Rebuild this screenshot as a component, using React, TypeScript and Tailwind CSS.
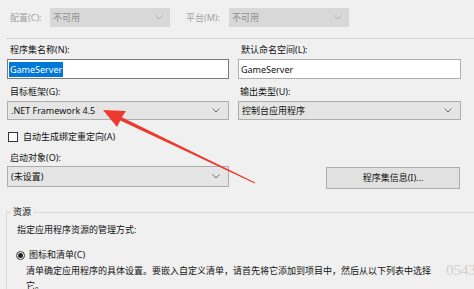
import React from "react";

function Chevron({ light }: { light?: boolean }) {
  return (
    <svg width="8" height="5" viewBox="0 0 8 5" className="shrink-0">
      <polyline
        points="0.5,0.5 4,4 7.5,0.5"
        fill="none"
        stroke={light ? "#b4b4b4" : "#6a6a6a"}
        strokeWidth="1"
      />
    </svg>
  );
}

function Dropdown({ text, h }: { text: string; h: string }) {
  return (
    <div
      className={`flex items-center justify-between ${h} border border-[#adadad] bg-[#e5e5e5] pl-[3px] pr-[8px] text-[#111]`}
    >
      <span className="leading-[14px]">{text}</span>
      <Chevron />
    </div>
  );
}

export default function App() {
  return (
    <div className="relative h-[289px] w-[474px] overflow-hidden bg-[#f0f0f0] font-['Noto_Sans','Noto_Sans_CJK_SC',sans-serif] text-[9px] text-[#111]">
      {/* top disabled row */}
      <div className="mt-[8px] flex h-[19px] items-center pl-[10px]">
        <span className="w-[40px] leading-[14px] text-[#a3a3a3]">配置(C):</span>
        <div className="flex h-[19px] w-[120px] items-center justify-between bg-[#d8d8d8] pl-[3px] pr-[7px]">
          <span className="leading-[14px] text-[#8e8e8e]">不可用</span>
          <Chevron light />
        </div>
        <span className="ml-[16px] w-[43px] leading-[14px] text-[#a3a3a3]">平台(M):</span>
        <div className="flex h-[19px] w-[120px] items-center justify-between bg-[#d8d8d8] pl-[3px] pr-[7px]">
          <span className="leading-[14px] text-[#8e8e8e]">不可用</span>
          <Chevron light />
        </div>
      </div>

      <div className="ml-[6px] mt-[11px] h-px bg-[#d3d3d3]" />

      {/* form grid */}
      <div className="grid grid-cols-[222px_223px] gap-x-[9px] px-[7px]">
        {/* row A */}
        <div className="mt-[4px] flex flex-col">
          <span className="h-[14px] pl-[3px] leading-[14px]">程序集名称(N):</span>
          <div className="mt-[2px] flex h-[20px] items-center border border-[#7a7a7a] bg-white pl-[1px]">
            <span className="bg-[#0078d7] px-[1px] leading-[15px] text-white">GameServer</span>
          </div>
        </div>
        <div className="mt-[4px] flex flex-col">
          <span className="h-[14px] pl-[3px] leading-[14px]">默认命名空间(L):</span>
          <div className="mt-[2px] flex h-[20px] items-center border border-[#adadad] bg-white pl-[2px]">
            <span className="leading-[15px]">GameServer</span>
          </div>
        </div>

        {/* row B */}
        <div className="mt-[6px] flex flex-col">
          <span className="h-[14px] pl-[3px] leading-[14px]">目标框架(G):</span>
          <div className="mt-[2px]">
            <Dropdown text=".NET Framework 4.5" h="h-[19px]" />
          </div>
        </div>
        <div className="mt-[6px] flex flex-col">
          <span className="h-[14px] pl-[2px] leading-[14px]">输出类型(U):</span>
          <div className="mt-[2px]">
            <Dropdown text="控制台应用程序" h="h-[19px]" />
          </div>
        </div>

        {/* checkbox row */}
        <div className="col-span-2 mt-[10px] flex h-[14px] items-center">
          <div className="ml-[1px] h-[10px] w-[10px] border border-[#333] bg-white" />
          <span className="ml-[5px] leading-[14px]">自动生成绑定重定向(A)</span>
        </div>

        {/* row D */}
        <div className="mt-[7px] flex flex-col">
          <span className="h-[14px] pl-[3px] leading-[14px]">启动对象(O):</span>
          <div className="mt-[1px]">
            <Dropdown text="(未设置)" h="h-[21px]" />
          </div>
        </div>
        <div className="mt-[7px] flex justify-end pt-[16px] pr-[1px]">
          <div className="flex h-[22px] w-[134px] items-center justify-center border border-[#adadad] bg-[#e1e1e1]">
            <span className="leading-[14px]">程序集信息(I)...</span>
          </div>
        </div>
      </div>

      {/* resources group */}
      <div className="relative ml-[6px] mt-[23px] border-l border-t border-[#d9d9d9] pl-[10px] pt-[10px]">
        <span className="absolute left-[4px] top-[-8px] bg-[#f0f0f0] px-[2px] leading-[14px]">资源</span>
        <div className="leading-[14px]">指定应用程序资源的管理方式:</div>
        <div className="mt-[11px] flex h-[14px] items-center">
          <div className="ml-[-1px] flex h-[9px] w-[9px] items-center justify-center rounded-full border border-[#333] bg-white">
            <div className="h-[5px] w-[5px] rounded-full bg-[#222]" />
          </div>
          <span className="ml-[4px] leading-[14px]">图标和清单(C)</span>
        </div>
        <div className="ml-[9px] mt-[1px] leading-[15px]">
          清单确定应用程序的具体设置。要嵌入自定义清单，请首先将它添加到项目中，然后从以下列表中选择
          <br />
          它。
        </div>
      </div>

      {/* watermark */}
      <span className="pointer-events-none absolute left-[446px] top-[262px] font-['Liberation_Serif',serif] text-[15px] leading-[16px] text-[#cfcfcf]">
        0543
      </span>

      {/* red arrow annotation */}
      <svg className="pointer-events-none absolute left-0 top-0" width="474" height="289" viewBox="0 0 474 289">
        <polygon
          points="103,110 126,111 121.8,117.3 255.2,182.5 254.8,183.5 120.3,120.5 117,127"
          fill="#ec3a2f"
        />
      </svg>
    </div>
  );
}
